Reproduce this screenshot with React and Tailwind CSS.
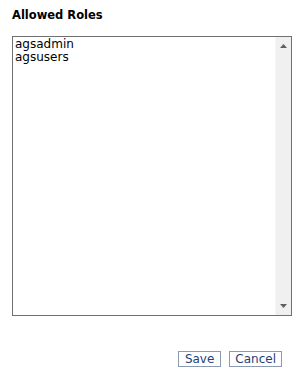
export default function App() {
  return (
    <div className="w-[298px] h-[373px] bg-white flex flex-col" style={{ fontFamily: '"DejaVu Sans", Verdana, sans-serif' }}>
      <div className="pl-[12px] pt-[9px] text-[11.5px] font-bold leading-[13px] text-black">Allowed Roles</div>
      <div className="ml-[12px] mt-[14px] w-[280px] h-[280px] border border-[#707070] flex">
        <div className="flex-1 pl-[2px] pt-[1px] text-[12px] leading-[13px] text-black">
          <div>agsadmin</div>
          <div>agsusers</div>
        </div>
        <div className="w-[16px] h-full bg-[#f0f0f0] border-l border-[#f7f7f7] flex flex-col justify-between items-center py-[7px]">
          <svg width="7" height="4" viewBox="0 0 7 4"><path d="M3.5 0 L7 4 L0 4 Z" fill="#606060" /></svg>
          <svg width="7" height="4" viewBox="0 0 7 4"><path d="M0 0 L7 0 L3.5 4 Z" fill="#606060" /></svg>
        </div>
      </div>
      <div className="mt-[35px] pr-[16px] flex justify-end gap-[8px]">
        <button className="h-[16px] px-[6px] border border-[#8a9cb3] bg-white text-[#1f3f7a] text-[12px] leading-[13px] flex items-center">Save</button>
        <button className="h-[16px] px-[5px] border border-[#8a9cb3] bg-white text-[#1f3f7a] text-[12px] leading-[13px] flex items-center">Cancel</button>
      </div>
    </div>
  );
}
